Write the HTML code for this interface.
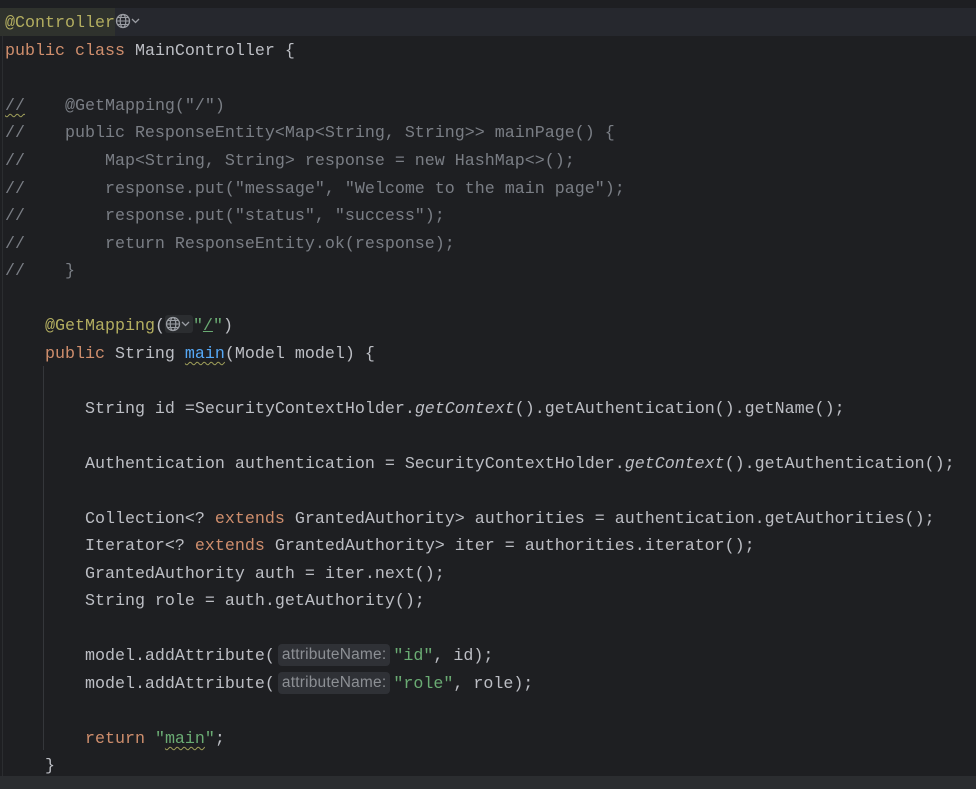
<!DOCTYPE html>
<html><head><meta charset="utf-8"><style>
html,body{margin:0;padding:0;background:#1e1f22;width:976px;height:789px;overflow:hidden;position:relative}
.l{position:absolute;left:5px;height:27px;line-height:27px;font-family:"Liberation Mono",monospace;font-size:16.67px;color:#bcbec4;white-space:pre;margin-top:2px}
.k{color:#cf8e6d}.a{color:#b3ae60}.c{color:#7a7e85}.s{color:#6aab73}.f{color:#56a8f5}.i{font-style:italic}
.hint{display:inline-block;font-family:"Liberation Sans",sans-serif;font-size:15.5px;color:#8c8f94;background:#2f3136;border-radius:4px;padding:0 4px;line-height:22px;margin:0 3px;vertical-align:1px;letter-spacing:0.2px}
.wv{text-decoration:underline wavy #a0a05a;text-decoration-thickness:1px;text-underline-offset:3px}
</style></head><body>
<div style="position:absolute;left:0;top:8px;width:976px;height:28px;background:#26282e"></div>
<div style="position:absolute;left:0;top:8px;width:115px;height:28px;background:#2f322d"></div>
<div style="position:absolute;left:2px;top:36px;width:1px;height:740px;background:#2b2d30"></div>
<div style="position:absolute;left:43px;top:366px;width:1px;height:384px;background:#35373b"></div>
<div style="position:absolute;left:0;top:776px;width:976px;height:13px;background:#2b2d30"></div>

<div class="l" style="top:8px"><span class="a">@Controller</span><svg width="28" height="18" style="vertical-align:-3px"><circle cx="8" cy="9" r="6.5" fill="none" stroke="#9a9da3" stroke-width="1.3"/><ellipse cx="8" cy="9" rx="2.8" ry="6.5" fill="none" stroke="#9a9da3" stroke-width="1.2"/><path d="M1.5 9h13M2.5 5.5h11M2.5 12.5h11" stroke="#9a9da3" stroke-width="1.1"/><path d="M17 7l3.5 3.5L24 7" fill="none" stroke="#9a9da3" stroke-width="1.3"/></svg></div>
<div class="l" style="top:36px"><span class="k">public class </span>MainController {</div>
<div class="l c" style="top:91px"><span class="wv">//</span>    @GetMapping("/")</div>
<div class="l c" style="top:118px">//    public ResponseEntity&lt;Map&lt;String, String&gt;&gt; mainPage() {</div>
<div class="l c" style="top:146px">//        Map&lt;String, String&gt; response = new HashMap&lt;&gt;();</div>
<div class="l c" style="top:174px">//        response.put("message", "Welcome to the main page");</div>
<div class="l c" style="top:201px">//        response.put("status", "success");</div>
<div class="l c" style="top:229px">//        return ResponseEntity.ok(response);</div>
<div class="l c" style="top:256px">//    }</div>
<div class="l" style="top:311px">    <span class="a">@GetMapping</span>(<svg width="28" height="18" style="vertical-align:-3px"><rect x="0" y="0" width="28" height="18" rx="3" fill="#2b2d30"/><circle cx="8" cy="9" r="6.5" fill="none" stroke="#9a9da3" stroke-width="1.3"/><ellipse cx="8" cy="9" rx="2.8" ry="6.5" fill="none" stroke="#9a9da3" stroke-width="1.2"/><path d="M1.5 9h13M2.5 5.5h11M2.5 12.5h11" stroke="#9a9da3" stroke-width="1.1"/><path d="M17 7l3.5 3.5L24 7" fill="none" stroke="#9a9da3" stroke-width="1.3"/></svg><span class="s">"<u>/</u>"</span>)</div>
<div class="l" style="top:339px">    <span class="k">public </span>String <span class="f wv">main</span>(Model model) {</div>
<div class="l" style="top:394px">        String id =SecurityContextHolder.<span class="i">getContext</span>().getAuthentication().getName();</div>
<div class="l" style="top:449px">        Authentication authentication = SecurityContextHolder.<span class="i">getContext</span>().getAuthentication();</div>
<div class="l" style="top:504px">        Collection&lt;? <span class="k">extends</span> GrantedAuthority&gt; authorities = authentication.getAuthorities();</div>
<div class="l" style="top:531px">        Iterator&lt;? <span class="k">extends</span> GrantedAuthority&gt; iter = authorities.iterator();</div>
<div class="l" style="top:559px">        GrantedAuthority auth = iter.next();</div>
<div class="l" style="top:586px">        String role = auth.getAuthority();</div>
<div class="l" style="top:641px">        model.addAttribute(<span class="hint">attributeName:</span><span class="s">"id"</span>, id);</div>
<div class="l" style="top:669px">        model.addAttribute(<span class="hint">attributeName:</span><span class="s">"role"</span>, role);</div>
<div class="l" style="top:724px">        <span class="k">return </span><span class="s">"<span class="wv">main</span>"</span>;</div>
<div class="l" style="top:751px">    }</div>
</body></html>
